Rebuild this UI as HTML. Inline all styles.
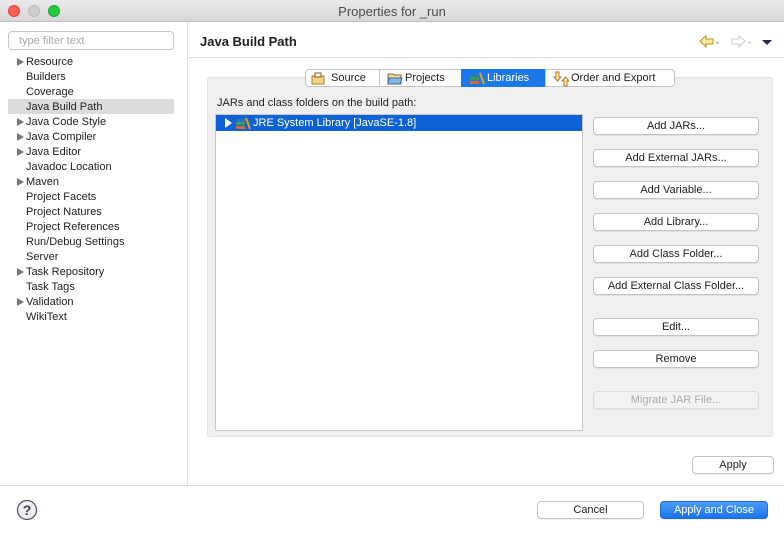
<!DOCTYPE html>
<html><head><style>
*{box-sizing:border-box;margin:0;padding:0}
body{width:784px;height:536px;overflow:hidden;font-family:"Liberation Sans",sans-serif;font-size:11px;color:#222;background:#fff;position:relative}
.a{position:absolute}
.btn{position:absolute;background:#fff;border:1px solid #c4c4c4;border-radius:4px;text-align:center;font-size:11px;line-height:17px;height:18px;box-shadow:0 1px 0 rgba(0,0,0,.06)}
.tree div{position:absolute;left:26px;font-size:11px;line-height:15px}
.tri{position:absolute;left:-9px;top:3px;width:0;height:0;border-left:7px solid #777;border-top:4px solid transparent;border-bottom:4px solid transparent}
.tab{position:absolute;top:69px;height:18px;border:1px solid #c4c4c4;background:#fff;line-height:17px;font-size:11px;padding-left:25px}
</style></head><body>
<div class="a" style="left:0;top:0;width:784px;height:22px;background:linear-gradient(#ebe9eb,#d8d6d8);border-bottom:1px solid #c0c0c0"></div>
<div class="a" style="left:8px;top:5px;width:12px;height:12px;border-radius:6px;background:#fe5f57;border:1px solid #e0443e"></div>
<div class="a" style="left:28px;top:5px;width:12px;height:12px;border-radius:6px;background:#cfcdcf;border:1px solid #bbb"></div>
<div class="a" style="left:48px;top:5px;width:12px;height:12px;border-radius:6px;background:#28c840;border:1px solid #1aab29"></div>
<div class="a" style="left:0;top:4px;width:784px;text-align:center;font-size:13px;color:#4d4d4d">Properties for _run</div>

<div class="a" style="left:187px;top:22px;width:1px;height:464px;background:#e0e0e0"></div>
<div class="a" style="left:8px;top:31px;width:166px;height:19px;border:1px solid #c8c8c8;border-radius:4px;color:#aaa;padding-left:10px;line-height:18px;font-size:11px">type filter text</div>
<div class="a" style="left:8px;top:99px;width:166px;height:15px;background:#dcdcdc"></div>
<div class="tree">
<div style="top:55px"><span class="tri"></span>Resource</div>
<div style="top:70px">Builders</div>
<div style="top:85px">Coverage</div>
<div style="top:100px">Java Build Path</div>
<div style="top:115px"><span class="tri"></span>Java Code Style</div>
<div style="top:130px"><span class="tri"></span>Java Compiler</div>
<div style="top:145px"><span class="tri"></span>Java Editor</div>
<div style="top:160px">Javadoc Location</div>
<div style="top:175px"><span class="tri"></span>Maven</div>
<div style="top:190px">Project Facets</div>
<div style="top:205px">Project Natures</div>
<div style="top:220px">Project References</div>
<div style="top:235px">Run/Debug Settings</div>
<div style="top:250px">Server</div>
<div style="top:265px"><span class="tri"></span>Task Repository</div>
<div style="top:280px">Task Tags</div>
<div style="top:295px"><span class="tri"></span>Validation</div>
<div style="top:310px">WikiText</div>
</div>

<div class="a" style="left:200px;top:34px;font-size:13px;font-weight:bold">Java Build Path</div>
<div class="a" style="left:188px;top:57px;width:596px;height:1px;background:#e0e0e0"></div>
<svg class="a" style="left:698px;top:34px" width="80" height="16">
<path d="M2 7 L8 2 V5 H15 V10 H8 V13 Z" fill="#fde9a8" stroke="#c9901a"/>
<path d="M18 8 l3 0 l-1.5 2z" fill="#999"/>
<path d="M47 7 L41 2 V5 H34 V10 H41 V13 Z" fill="#fff" stroke="#ccc"/>
<path d="M50 8 l3 0 l-1.5 2z" fill="#bbb"/>
<path d="M64 6 h10 l-5 5z" fill="#2a2250"/>
</svg>

<div class="a" style="left:207px;top:77px;width:566px;height:360px;background:#f0f0f0;border:1px solid #e2e2e2;border-radius:3px"></div>
<div class="tab" style="left:305px;width:75px;border-radius:4px 0 0 4px">Source</div>
<div class="tab" style="left:379px;width:83px">Projects</div>
<div class="tab" style="left:461px;width:85px;background:#1b78e8;border-color:#1b78e8;color:#fff">Libraries</div>
<div class="tab" style="left:545px;width:130px;border-radius:0 4px 4px 0">Order and Export</div>
<svg class="a" style="left:311px;top:71px" width="16" height="14"><path d="M1 5h12v8H1z" fill="#f5d48a" stroke="#b07a28"/><path d="M4 2h6v4H4z" fill="#fff" stroke="#8a5a20"/></svg>
<svg class="a" style="left:387px;top:71px" width="16" height="14"><path d="M1 3h5l1 1h7v9H1z" fill="#f3dba0" stroke="#8a6a30"/><path d="M2 7h13l-2 6H1z" fill="#8ab4e6" stroke="#3a6aa8"/></svg>
<svg class="a" style="left:469px;top:71px" width="16" height="14"><rect x="1" y="10" width="9" height="3" fill="#d86a3a"/><rect x="1" y="6" width="9" height="3" fill="#3c9a5a"/><rect x="2" y="3" width="8" height="3" fill="#2a7ab8"/><path d="M11 2l4 11" stroke="#e0a020" stroke-width="2"/></svg>
<svg class="a" style="left:553px;top:71px" width="16" height="16"><path d="M3 1h3v5h2l-3.5 4L1 6h2z" fill="#fde9a8" stroke="#b07a28"/><path d="M11 15V10H9l3.5-4L16 10h-2v5z" fill="#fde9a8" stroke="#b07a28"/></svg>

<div class="a" style="left:217px;top:97px">JARs and class folders on the build path:</div>
<div class="a" style="left:215px;top:114px;width:368px;height:317px;background:#fff;border:1px solid #c8c8c8"></div>
<div class="a" style="left:216px;top:115px;width:366px;height:16px;background:#0d63d6"></div>
<div class="a" style="left:225px;top:118px;width:0;height:0;border-left:7px solid #fff;border-top:5px solid transparent;border-bottom:5px solid transparent"></div>
<svg class="a" style="left:235px;top:116px" width="16" height="14"><rect x="1" y="10" width="9" height="3" fill="#d86a3a"/><rect x="1" y="6" width="9" height="3" fill="#3c9a5a"/><rect x="2" y="3" width="8" height="3" fill="#2a7ab8"/><path d="M11 2l4 11" stroke="#e0a020" stroke-width="2"/></svg>
<div class="a" style="left:253px;top:117px;color:#fff;font-size:11px">JRE System Library [JavaSE-1.8]</div>

<div class="btn" style="left:593px;top:117px;width:166px">Add JARs...</div>
<div class="btn" style="left:593px;top:149px;width:166px">Add External JARs...</div>
<div class="btn" style="left:593px;top:181px;width:166px">Add Variable...</div>
<div class="btn" style="left:593px;top:213px;width:166px">Add Library...</div>
<div class="btn" style="left:593px;top:245px;width:166px">Add Class Folder...</div>
<div class="btn" style="left:593px;top:277px;width:166px">Add External Class Folder...</div>
<div class="btn" style="left:593px;top:318px;width:166px">Edit...</div>
<div class="btn" style="left:593px;top:350px;width:166px">Remove</div>
<div class="btn" style="left:593px;top:391px;width:166px;background:#f3f3f3;color:#aaa;border-color:#ddd">Migrate JAR File...</div>

<div class="btn" style="left:692px;top:456px;width:82px">Apply</div>
<div class="a" style="left:0;top:485px;width:784px;height:1px;background:#dcdcdc"></div>
<svg class="a" style="left:16px;top:499px" width="22" height="22"><circle cx="11" cy="11" r="9.5" fill="#eef0f4" stroke="#556" stroke-width="1.3"/><text x="11" y="16" text-anchor="middle" font-family="Liberation Sans" font-weight="bold" font-size="14" fill="#445">?</text></svg>
<div class="btn" style="left:537px;top:501px;width:107px">Cancel</div>
<div class="btn" style="left:660px;top:501px;width:108px;background:linear-gradient(#4c9bf8,#1a73ea);border-color:#1a6ae0;color:#fff">Apply and Close</div>
</body></html>
